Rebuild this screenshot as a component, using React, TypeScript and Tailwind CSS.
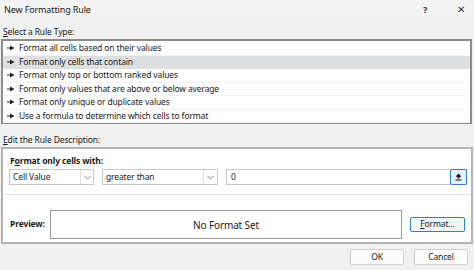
import React from "react";

const Arrow = () => (
  <svg width="8" height="6" viewBox="0 0 8 6" className="shrink-0">
    <rect x="0" y="2.5" width="4" height="1" fill="#222" />
    <path d="M3 0.5 L7.5 3 L3 5.5 Z" fill="#222" />
  </svg>
);

const Chevron = () => (
  <svg width="7" height="5" viewBox="0 0 7 5">
    <path d="M0.5 1 L3.5 4 L6.5 1" fill="none" stroke="#777" strokeWidth="0.9" />
  </svg>
);

const rows = [
  "Format all cells based on their values",
  "Format only cells that contain",
  "Format only top or bottom ranked values",
  "Format only values that are above or below average",
  "Format only unique or duplicate values",
  "Use a formula to determine which cells to format",
];

export default function App() {
  return (
    <div
      className="w-[474px] h-[270px] bg-[#f0f0f0] overflow-hidden flex flex-col text-[#1a1a1a] text-[8.5px] leading-none tracking-[-0.13px]"
      style={{ fontFamily: '"Noto Sans", "Open Sans", sans-serif' }}
    >
      {/* title bar */}
      <div className="h-[18px] flex items-center pl-[4px] pr-[9px] bg-[#f3f3f3]">
        <span className="text-[9px]">New Formatting Rule</span>
        <div className="ml-auto flex items-center gap-[30px] text-[9px]">
          <span className="font-bold text-[#333]">?</span>
          <span className="text-[10px] text-[#333]">✕</span>
        </div>
      </div>

      <div className="pl-[3px] mt-[9px] h-[10px] flex items-center">
        <span><span className="underline">S</span>elect a Rule Type:</span>
      </div>

      <div className="ml-[1px] mt-[2px] w-[471px] h-[85px] border-2 border-[#8c8c8c] bg-white pt-[1px]">
        {rows.map((r, i) => (
          <div
            key={r}
            className={`h-[13.5px] flex items-center gap-[4px] pl-[4px] ${
              i === 1 ? "bg-[#dedfe0]" : "border-b border-[#f2f2f2]"
            }`}
          >
            <Arrow />
            <span>{r}</span>
          </div>
        ))}
      </div>

      <div className="pl-[3px] mt-[11px] h-[10px] flex items-center">
        <span><span className="underline">E</span>dit the Rule Description:</span>
      </div>

      <div className="ml-[1px] mt-[2px] w-[472px] h-[97px] border-2 border-[#b4b4b4] bg-white flex flex-col">
        <div className="pl-[7px] mt-[7px] h-[10px] flex items-center font-bold">
          <span>F<span className="underline">o</span>rmat only cells with:</span>
        </div>
        <div className="mt-[3px] flex items-center pl-[6px] h-[16px]">
          <div className="w-[85px] h-[16px] border border-[#c8c8c8] flex items-center">
            <span className="pl-[3px] flex-1">Cell Value</span>
            <div className="w-[13px] h-full border-l border-[#dcdcdc] flex items-center justify-center">
              <Chevron />
            </div>
          </div>
          <div className="ml-[8px] w-[116px] h-[16px] border border-[#c8c8c8] flex items-center">
            <span className="pl-[3px] flex-1">greater than</span>
            <div className="w-[14px] h-full border-l border-[#dcdcdc] flex items-center justify-center">
              <Chevron />
            </div>
          </div>
          <div className="ml-[8px] w-[241px] h-[16px] border border-[#c8c8c8] flex items-center">
            <span className="pl-[4px] flex-1">0</span>
            <div className="w-[17px] h-[16px] mr-[-1px] border border-[#2f7fd4] rounded-[2px] bg-[#e8f0fa] flex items-center justify-center">
              <svg width="7" height="8" viewBox="0 0 7 8">
                <path d="M3.5 0.5 L6.5 3.8 L4.5 3.8 L4.5 5.5 L2.5 5.5 L2.5 3.8 L0.5 3.8 Z" fill="#111" />
                <rect x="0.5" y="6.5" width="6" height="1" fill="#111" />
              </svg>
            </div>
          </div>
        </div>
        <div className="mt-[9px] h-px bg-[#e3e3e3]" />
        <div className="mt-[15px] flex items-center pl-[7px]">
          <span className="font-bold w-[40px]">Preview:</span>
          <div className="w-[352px] h-[29px] border border-[#9a9a9a] flex items-center justify-center text-[10px]">
            No Format Set
          </div>
          <div className="ml-[8px] w-[55px] h-[15px] border border-[#2f7fd4] rounded-[2px] bg-[#f4f4f4] flex items-center justify-center">
            <span><span className="underline">F</span>ormat...</span>
          </div>
        </div>
      </div>

      <div className="mt-[5px] flex justify-end pr-[6px] gap-[10px]">
        <div className="w-[54px] h-[16px] rounded-[2px] border border-[#d0d0d0] bg-[#fbfbfb] flex items-center justify-center">
          OK
        </div>
        <div className="w-[54px] h-[16px] rounded-[2px] border border-[#d0d0d0] bg-[#fbfbfb] flex items-center justify-center">
          Cancel
        </div>
      </div>
    </div>
  );
}
